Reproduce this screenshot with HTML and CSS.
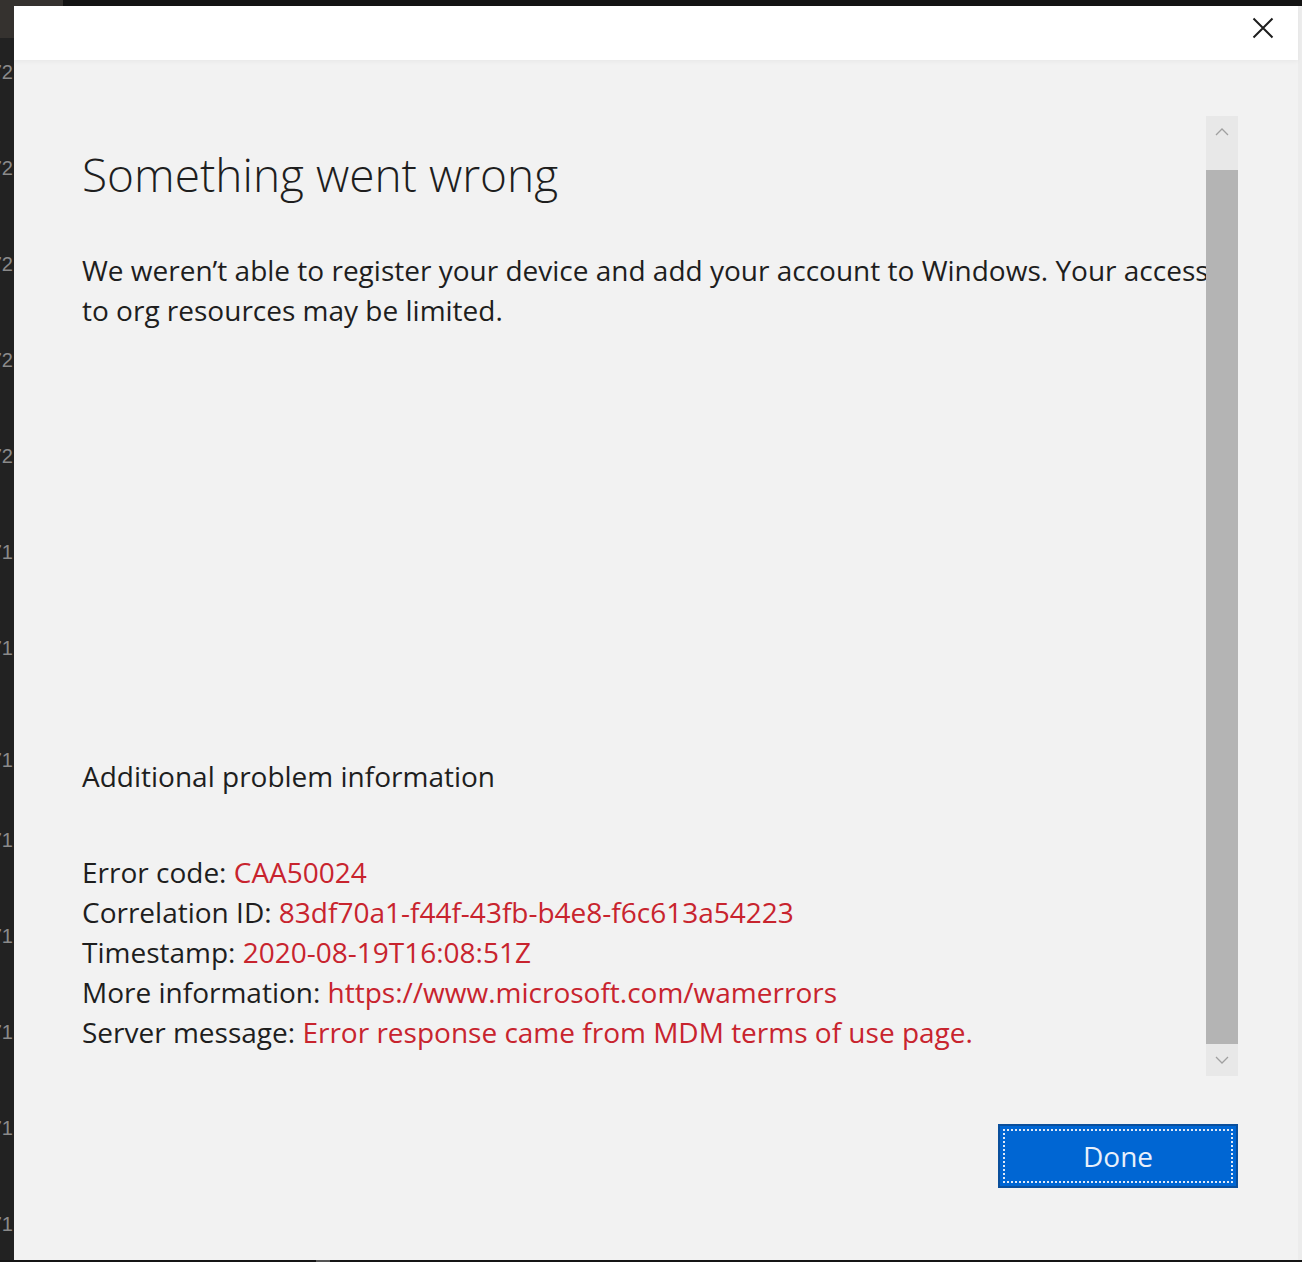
FILE: index.html
```html
<!DOCTYPE html>
<html lang="en">
<head>
<meta charset="utf-8">
<title>Something went wrong</title>
<link rel="stylesheet" href="styles.css">
</head>
<body>
<div class="screen">
  <div class="topstrip"><div class="topstrip-left"></div></div>
  <div class="middle">
    <div class="leftstrip">
      <div class="leftstrip-top"></div>
      <span class="ln l1">72</span>
      <span class="ln">72</span>
      <span class="ln">72</span>
      <span class="ln">72</span>
      <span class="ln">72</span>
      <span class="ln">71</span>
      <span class="ln">71</span>
      <span class="ln l8">71</span>
      <span class="ln l9">71</span>
      <span class="ln">71</span>
      <span class="ln">71</span>
      <span class="ln">71</span>
      <span class="ln">71</span>
    </div>
    <div class="dialog">
      <div class="titlebar">
        <button class="close" aria-label="Close">
          <svg width="22" height="22" viewBox="0 0 22 22"><path d="M1.5 1.5 L20.5 20.5 M20.5 1.5 L1.5 20.5" stroke="#1e1e1e" stroke-width="2" fill="none"/></svg>
        </button>
      </div>
      <div class="body">
        <div class="scrollarea">
          <div class="viewport">
            <h1 class="heading">Something went wrong</h1>
            <p class="message">We weren’t able to register your device and add your account to Windows. Your access to org resources may be limited.</p>
            <p class="subhead">Additional problem information</p>
            <div class="details">
              <div>Error code: <span class="red">CAA50024</span></div>
              <div>Correlation ID: <span class="red">83df70a1-f44f-43fb-b4e8-f6c613a54223</span></div>
              <div>Timestamp: <span class="red">2020-08-19T16:08:51Z</span></div>
              <div>More information: <span class="red">https://www.microsoft.com/wamerrors</span></div>
              <div>Server message: <span class="red">Error response came from MDM terms of use page.</span></div>
            </div>
          </div>
          <div class="scrollbar">
            <div class="arrow up"><svg width="14" height="8" viewBox="0 0 14 8"><path d="M1 7 L7 1 L13 7" stroke="#a0a0a0" stroke-width="1.3" fill="none"/></svg></div>
            <div class="thumb"></div>
            <div class="arrow down"><svg width="14" height="8" viewBox="0 0 14 8"><path d="M1 1 L7 7 L13 1" stroke="#a0a0a0" stroke-width="1.3" fill="none"/></svg></div>
          </div>
        </div>
        <div class="actions">
          <button class="done"><span class="focus">Done</span></button>
        </div>
      </div>
    </div>
  </div>
  <div class="bottomstrip"><div class="bottomstrip-mark"></div></div>
</div>
</body>
</html>
```
FILE: styles.css
```css
html, body {
  margin: 0;
  padding: 0;
  background: #141414;
}
.screen {
  width: 1302px;
  height: 1262px;
  display: flex;
  flex-direction: column;
  overflow: hidden;
  font-family: "Open Sans", "Noto Sans", sans-serif;
}
.topstrip {
  height: 6px;
  background: #131313;
  display: flex;
  flex-shrink: 0;
}
.topstrip-left {
  width: 63px;
  background: #35322f;
}
.middle {
  height: 1254px;
  display: flex;
  flex-shrink: 0;
}
.leftstrip {
  width: 14px;
  flex-shrink: 0;
  background: #222222;
  display: flex;
  flex-direction: column;
  overflow: hidden;
  color: #8a8a8a;
  font-family: "Liberation Sans", sans-serif;
  font-size: 20px;
  line-height: 20px;
}
.leftstrip-top {
  height: 32px;
  margin-bottom: -32px;
  background: #35322f;
  flex-shrink: 0;
}
.ln {
  display: block;
  height: 20px;
  margin-top: 76px;
  text-align: right;
  white-space: nowrap;
  width: 13px;
  overflow: hidden;
  direction: rtl;
  flex-shrink: 0;
}
.ln.l1 { margin-top: 56px; }
.ln.l8 { margin-top: 92px; }
.ln.l9 { margin-top: 60px; }
.dialog {
  flex: 1;
  min-width: 0;
  display: flex;
  flex-direction: column;
  background: #f2f2f2;
  border-right: 4px solid #ececec;
}
.titlebar {
  height: 54px;
  flex-shrink: 0;
  background: #ffffff;
  display: flex;
  justify-content: flex-end;
  align-items: flex-start;
  box-shadow: 0 2px 4px rgba(0,0,0,0.04);
  position: relative;
}
.close {
  border: 0;
  background: transparent;
  padding: 0;
  margin: 11px 24px 0 0;
  width: 22px;
  height: 22px;
  display: flex;
}
.body {
  flex: 1;
  min-height: 0;
  display: flex;
  flex-direction: column;
  padding-top: 56px;
}
.scrollarea {
  height: 960px;
  display: flex;
  padding-right: 60px;
}
.viewport {
  flex: 1;
  min-width: 0;
  overflow: hidden;
  padding-left: 68px;
  color: #1e1e1e;
  display: flex;
  flex-direction: column;
}
.heading {
  margin: 26px 0 0 0;
  font-weight: 300;
  font-size: 46px;
  line-height: 64px;
  white-space: nowrap;
}
.message {
  margin: 44px 0 0 0;
  font-size: 28px;
  line-height: 40px;
  width: 1150px;
  flex-shrink: 0;
}
.subhead {
  margin: 426px 0 0 0;
  font-size: 28px;
  line-height: 40px;
  white-space: nowrap;
}
.details {
  margin-top: 56px;
  font-size: 28px;
  line-height: 40px;
  white-space: nowrap;
}
.red {
  color: #c8242e;
}
.scrollbar {
  width: 32px;
  flex-shrink: 0;
  display: flex;
  flex-direction: column;
  background: #e8e8e8;
}
.arrow {
  height: 32px;
  display: flex;
  align-items: center;
  justify-content: center;
}
.arrow.up { height: 54px; align-items: flex-start; }
.arrow.up svg { margin-top: 12px; }
.thumb {
  flex: 1;
  background: #b4b4b4;
}
.actions {
  display: flex;
  justify-content: flex-end;
  padding: 48px 60px 0 0;
}
.done {
  width: 240px;
  height: 64px;
  background: #0066d3;
  border: 2px solid #0a4f9c;
  padding: 3px;
  margin: 0;
  display: flex;
}
.focus {
  flex: 1;
  border: 2px dotted #dfe9f7;
  color: #e8f0fb;
  font-family: "Open Sans", "Noto Sans", sans-serif;
  font-size: 28px;
  display: flex;
  align-items: center;
  justify-content: center;
}
.bottomstrip {
  height: 2px;
  flex-shrink: 0;
  background: #151515;
  display: flex;
}
.bottomstrip-mark {
  width: 14px;
  margin-left: 316px;
  background: #555;
}
```
